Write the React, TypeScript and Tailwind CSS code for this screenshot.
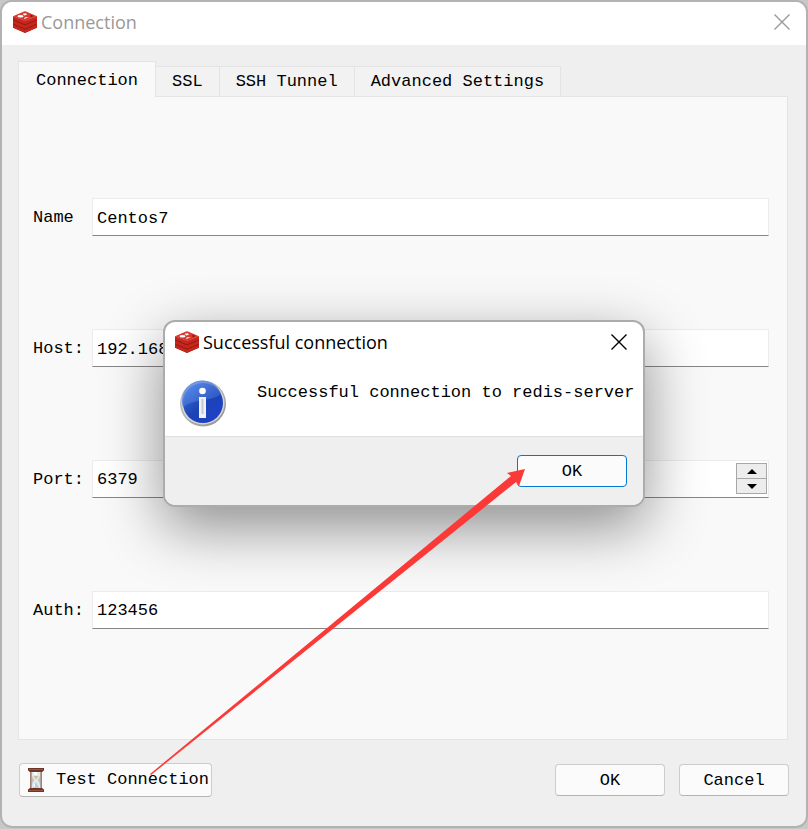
import type { ReactNode } from "react";

const tabs = ["SSL", "SSH Tunnel", "Advanced Settings"];

const mono = "font-['Liberation_Mono',monospace] text-[17px] leading-6 text-black";

function RedisIcon() {
  return (
    <svg viewBox="0 0 24 22" className="h-[22px] w-6 shrink-0" aria-hidden="true">
      <path d="M0 5.500v11.300L12 22l12-5.200V5.500L12 10z" fill="#9c1c14" />
      <path d="M0 13.700 12 18.700 24 13.700v2.800L12 21.700 0 16.500z" fill="#c6261c" />
      <path d="M0 9.500 12 14.500 24 9.500v2.900L12 17.400 0 12.400z" fill="#c6261c" />
      <path d="M0 5.300 12 10.300 24 5.300v2.900L12 13.200 0 8.200z" fill="#c6261c" />
      <path d="M0 5.300 11 .5q1-.4 2 0L24 5.300 12 10.200z" fill="#dc382d" />
      <path d="m10.200 2.200 1.600.3 1.600-.6-.4 1.100 1.500.6-1.900.3-.9.900-.7-1.100-1.800-.2 1.400-.6z" fill="#fff" />
      <ellipse cx="7.500" cy="5.300" rx="3" ry="1.200" fill="#fff" />
      <path d="m10.800 8.200 1.200-2 3.800-.3z" fill="#fff" />
      <path d="m17.500 3.600 3 1.400-3 1.200z" fill="#8f140c" />
    </svg>
  );
}

function CloseIcon() {
  return (
    <svg viewBox="0 0 16 16" className="size-4" fill="none" stroke="currentColor" strokeWidth="1.400">
      <path d="M.5.5l15 15M15.500.5l-15 15" />
    </svg>
  );
}

function InfoIcon() {
  return (
    <svg viewBox="0 0 48 48" className="size-12 shrink-0" aria-hidden="true">
      <defs>
        <linearGradient id="ring" x1="0" y1="0" x2="1" y2="1">
          <stop offset="0" stopColor="#c4c4c4" />
          <stop offset=".5" stopColor="#b4b4b4" />
          <stop offset="1" stopColor="#8f8b88" />
        </linearGradient>
        <linearGradient id="ball" x1="0" y1="0" x2="1" y2="1">
          <stop offset="0" stopColor="#3f74dd" />
          <stop offset=".5" stopColor="#1c44b4" />
          <stop offset="1" stopColor="#1f3fd0" />
        </linearGradient>
        <linearGradient id="shine" x1="0" y1="0" x2="1" y2="1">
          <stop offset="0" stopColor="#6a9af5" />
          <stop offset="1" stopColor="#2450bd" />
        </linearGradient>
      </defs>
      <circle cx="24" cy="24.500" r="23" fill="url(#ring)" />
      <circle cx="24" cy="24" r="21.500" fill="#d6d6d6" />
      <circle cx="24" cy="24" r="20" fill="url(#ball)" />
      <path d="M4 28a20 20 0 0 1 38-13Q38 19 24 21T4 28z" fill="url(#shine)" opacity=".8" />
      <circle cx="23.500" cy="12" r="3.300" fill="#fff" />
      <path d="M20 18h7v21h-7z" fill="#f0f0f6" />
      <path d="M22.500 20h2v15h-2z" fill="#c4c8d4" />
    </svg>
  );
}

function HourglassIcon() {
  return (
    <svg viewBox="0 0 16 24" className="h-6 w-4 shrink-0" aria-hidden="true">
      <path d="M2 3h12v18H2z" fill="#c9c3bf" />
      <path d="M4 3h8q1 5-2.500 9Q13 16 12 21H4q-1-5 2.500-9Q3 8 4 3z" fill="#dfeaf2" />
      <path d="M5.500 8h5L8 11.500z" fill="#d8bd86" />
      <path d="M8 14l3 6H5z" fill="#b9cbd8" />
      <path d="M6 4h3v3H6zM6 16h1v3H6z" fill="#fff" />
      <path d="M2 3h1.500v18H2zM12.500 3H14v18h-1.500z" fill="#9c8276" />
      <path d="M0 0h16v2.500l-2 1.500H2L0 2.500zM2 20h12l2 1.500V24H0v-2.500z" fill="#6f3428" />
      <path d="M1 1h14v1H1zM1 22h14v1H1z" fill="#9a5443" />
    </svg>
  );
}

function Button({ children, primary }: { children: ReactNode; primary?: boolean }) {
  return (
    <button
      type="button"
      className={`${mono} h-8 w-[110px] rounded border bg-[#fbfbfb] pt-0.5 ${
        primary ? "border-[#0078d4]" : "border-[#cccccc] border-b-[#b4b4b4]"
      }`}
    >
      {children}
    </button>
  );
}

function Field({ id, label, value }: { id: string; label: string; value: string }) {
  return (
    <div className="flex items-center">
      <label htmlFor={id} className={`${mono} w-[59px] shrink-0 pt-0.5`}>
        {label}
      </label>
      <div className="flex h-[38px] min-w-0 flex-1 items-center border border-[#ececec] border-b-[#868686] bg-white">
        <input
          id={id}
          defaultValue={value}
          className={`${mono} h-full min-w-0 flex-1 bg-transparent px-1 pt-0.5 outline-none`}
        />
        {id === "port" && (
          <div className="mr-px flex h-[31px] w-[31px] flex-col border border-[#a8a8a8] bg-[#ededed]">
            <button type="button" aria-label="Increase" className="flex flex-1 items-center justify-center border-b border-[#a8a8a8]">
              <svg viewBox="0 0 10 5" className="h-[5px] w-[10px]">
                <path d="M5 0l5 5H0z" />
              </svg>
            </button>
            <button type="button" aria-label="Decrease" className="flex flex-1 items-center justify-center">
              <svg viewBox="0 0 10 5" className="h-[5px] w-[10px]">
                <path d="M0 0h10L5 5z" />
              </svg>
            </button>
          </div>
        )}
      </div>
    </div>
  );
}

function SuccessDialog() {
  return (
    <div
      role="dialog"
      aria-labelledby="dialog-title"
      className="w-[482px] overflow-hidden rounded-xl border-2 border-[#acacac] bg-white shadow-[0_20px_60px_rgba(0,0,0,0.44)]"
    >
      <div className="flex h-10 items-center gap-1 pr-4 pl-[10px]">
        <RedisIcon />
        <h2 id="dialog-title" className="flex-1 font-['Open_Sans',sans-serif] text-lg text-black">
          Successful connection
        </h2>
        <button type="button" aria-label="Close">
          <CloseIcon />
        </button>
      </div>
      <div className="flex h-[74px] items-start pt-[17px] pl-[14px]">
        <InfoIcon />
        <p className={`${mono} ml-[30px] pt-0.5 whitespace-nowrap`}>Successful connection to redis-server</p>
      </div>
      <div className="flex h-[69px] items-center justify-end border-t border-[#dfdfdf] bg-[#efefef] px-4">
        <Button primary>OK</Button>
      </div>
    </div>
  );
}

export default function App() {
  return (
    <div className="relative flex min-h-screen flex-col bg-[#c8c8c8] pb-px">
      <div className="flex flex-1 flex-col overflow-hidden rounded-xl border-2 border-[#b2b2b2] bg-[#efefef]">
        <header className="flex h-[43px] items-center gap-1 bg-white pr-4 pb-1 pl-[11px]">
          <RedisIcon />
          <h1 className="flex-1 font-['Open_Sans',sans-serif] text-lg text-[#999]">Connection</h1>
          <button type="button" aria-label="Close" className="text-[#999]">
            <CloseIcon />
          </button>
        </header>

        <main className="flex flex-1 flex-col pt-4 pr-[18px] pl-4">
          <div role="tablist" className="flex items-end">
            <button
              type="button"
              role="tab"
              aria-selected="true"
              className={`${mono} relative -mb-px h-9 border border-b-0 border-[#e4e4e4] bg-[#f9f9f9] px-[17px] pt-0.5`}
            >
              Connection
            </button>
            {tabs.map((tab) => (
              <button
                key={tab}
                type="button"
                role="tab"
                aria-selected="false"
                className={`${mono} h-[30px] border-t border-r border-[#e4e4e4] bg-[#f2f2f2] px-4`}
              >
                {tab}
              </button>
            ))}
          </div>

          <div className="grid flex-1 grid-rows-4 border border-[#e4e4e4] bg-[#f9f9f9] pt-[55px] pr-[18px] pb-16 pl-[14px]">
            <Field id="name" label="Name" value="Centos7" />
            <Field id="host" label="Host:" value="192.168" />
            <Field id="port" label="Port:" value="6379" />
            <Field id="auth" label="Auth:" value="123456" />
          </div>
        </main>

        <footer className="flex h-[86px] items-center gap-[14px] pr-[17px] pb-[6px] pl-[17px]">
          <button
            type="button"
            className={`${mono} mr-auto flex h-[34px] items-center gap-3 rounded border border-[#cccccc] border-b-[#b4b4b4] bg-[#fbfbfb] pr-0.5 pl-2`}
          >
            <HourglassIcon />
            Test Connection
          </button>
          <Button>OK</Button>
          <Button>Cancel</Button>
        </footer>
      </div>

      <div className="absolute inset-0 flex items-center justify-center pb-[3px]">
        <SuccessDialog />
      </div>

      <svg
        viewBox="0 0 808 829"
        className="pointer-events-none absolute inset-0 h-full w-full"
        aria-hidden="true"
      >
        <path d="M150 774 511 476 507 473 525 469 519 486 516 482 151 775z" fill="#fb3a38" />
      </svg>
    </div>
  );
}
